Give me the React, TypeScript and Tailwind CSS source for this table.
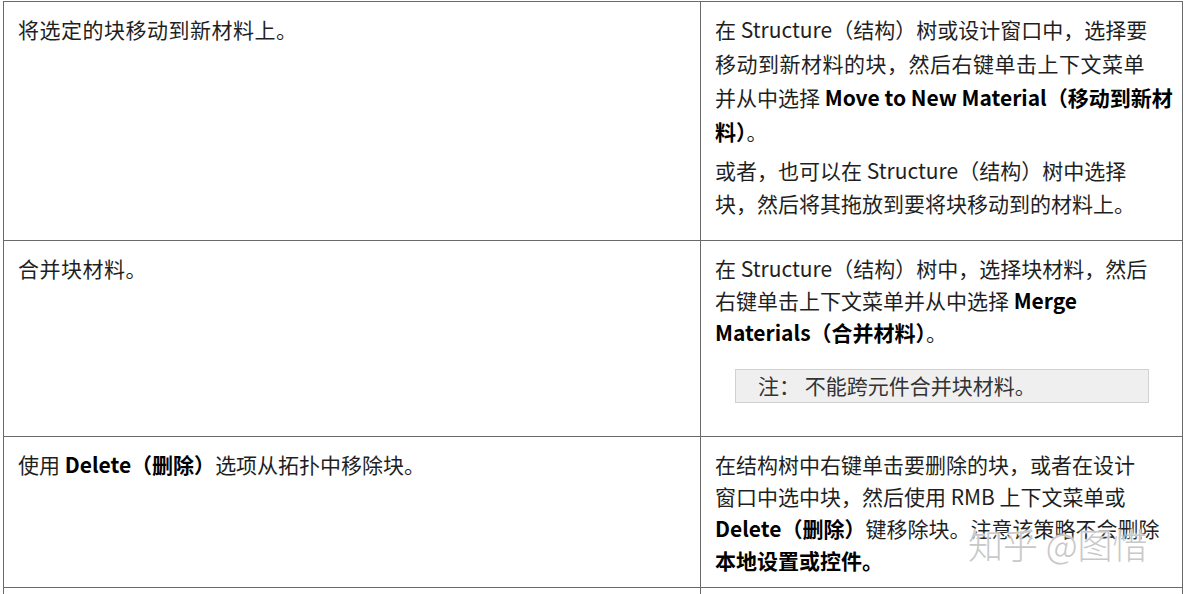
import React from "react"

const lines = (items: React.ReactNode[], lh: string) =>
  items.map((line, i) => (
    <div key={i} className={`whitespace-nowrap ${lh}`}>
      {line}
    </div>
  ))

export default function App() {
  return (
    <div
      className="relative h-[594px] w-[1185px] overflow-hidden bg-white text-[21px] text-[#1f1f1f]"
      style={{ fontFamily: '"Noto Sans CJK SC", "Noto Sans", sans-serif' }}
    >
      <div className="ml-[3px] mt-[1px] w-[1180px] border-x border-t border-[#6a6a6a]">
        {/* row 1 */}
        <div className="flex border-b border-[#6a6a6a]">
          <div className="w-[697px] shrink-0 border-r border-[#6a6a6a] pl-[14px] pt-[10px] leading-[34px] tracking-[0.5px]">
            将选定的块移动到新材料上。
          </div>
          <div className="flex-1 pl-[14px] pt-[10px] pb-[20px]">
            {lines(
              [
                "在 Structure（结构）树或设计窗口中，选择要",
                <span className="tracking-[0.5px]">移动到新材料的块，然后右键单击上下文菜单</span>,
                <>
                  并从中选择 <b className="font-bold text-black">Move to New Material（移动到新材</b>
                </>,
                <>
                  <b className="font-bold text-black">料）</b>。
                </>,
              ],
              "leading-[34px]"
            )}
            <div className="mt-[6px]">
              {lines(
                ["或者，也可以在 Structure（结构）树中选择", "块，然后将其拖放到要将块移动到的材料上。"],
                "leading-[33px]"
              )}
            </div>
          </div>
        </div>

        {/* row 2 */}
        <div className="flex border-b border-[#6a6a6a]">
          <div className="w-[697px] shrink-0 border-r border-[#6a6a6a] pl-[14px] pt-[11px] leading-[32px] tracking-[0.5px]">
            合并块材料。
          </div>
          <div className="flex-1 pl-[14px] pt-[11px] pb-[33px]">
            {lines(
              [
                "在 Structure（结构）树中，选择块材料，然后",
                <>
                  右键单击上下文菜单并从中选择 <b className="font-bold text-black">Merge</b>
                </>,
                <>
                  <b className="font-bold text-black">Materials（合并材料）</b>。
                </>,
              ],
              "leading-[32px]"
            )}
            <div className="mt-[21px] ml-[20px] flex h-[34px] w-[414px] items-center border border-[#d2d2d2] bg-[#efefef] pl-[22px] text-[#333]">
              <span className="whitespace-nowrap">注：&nbsp;不能跨元件合并块材料。</span>
            </div>
          </div>
        </div>

        {/* row 3 */}
        <div className="flex border-b border-[#6a6a6a]">
          <div className="w-[697px] shrink-0 border-r border-[#6a6a6a] pl-[14px] pt-[11px] leading-[32px]">
            使用 <b className="font-bold text-black">Delete（删除）</b>选项从拓扑中移除块。
          </div>
          <div className="flex-1 pl-[14px] pt-[11px] pb-[11px]">
            {lines(
              [
                "在结构树中右键单击要删除的块，或者在设计",
                "窗口中选中块，然后使用 RMB 上下文菜单或",
                <>
                  <b className="font-bold text-black">Delete（删除）</b>键移除块。注意该策略不会删除
                </>,
                <b className="font-bold text-black">本地设置或控件。</b>,
              ],
              "leading-[32px]"
            )}
          </div>
        </div>

        {/* row 4, cut off */}
        <div className="flex h-[10px]">
          <div className="w-[697px] shrink-0 border-r border-[#6a6a6a]" />
          <div className="flex-1" />
        </div>
      </div>

      {/* watermark */}
      <div className="absolute left-[968px] top-[522px] whitespace-nowrap text-[35px] font-light leading-[44px] text-[#c8c8c8] [text-shadow:0_0_2px_#fff,0_0_3px_#fff]">
        知乎 @图惜
      </div>
    </div>
  )
}
